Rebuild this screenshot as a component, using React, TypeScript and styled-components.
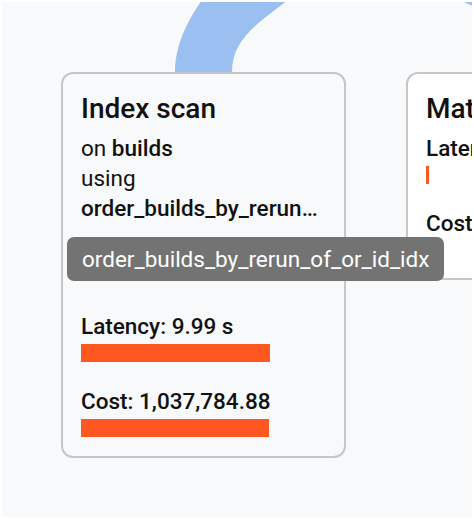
import React from "react";
import styled, { createGlobalStyle } from "styled-components";

const GlobalStyle = createGlobalStyle`
  html, body {
    margin: 0;
    padding: 0;
    background: #ffffff;
  }
  body {
    font-family: Roboto, "Noto Sans", "Liberation Sans", sans-serif;
    color: #111111;
  }
`;

type Metric = { label: string; value: string; ratio: number };

type PlanNode = {
  id: string;
  x: number;
  y: number;
  width: number;
  height: number;
  title: string;
  table?: string;
  index?: string;
  latency: Metric;
  cost: Metric;
  active?: boolean;
};

const BAR_MAX = 189;

const nodes: PlanNode[] = [
  {
    id: "index-scan",
    x: 59,
    y: 70,
    width: 285,
    height: 386,
    title: "Index scan",
    table: "builds",
    index: "order_builds_by_rerun_of_or_id_idx",
    latency: { label: "Latency", value: "9.99 s", ratio: 1 },
    cost: { label: "Cost", value: "1,037,784.88", ratio: 0.995 },
  },
  {
    id: "materialize",
    x: 404,
    y: 70,
    width: 285,
    height: 208,
    title: "Materialize",
    latency: { label: "Latency", value: "0.15 s", ratio: 0.016 },
    cost: { label: "Cost", value: "0.00", ratio: 0 },
    active: true,
  },
];

export default function App() {
  return (
    <>
      <GlobalStyle />
      <Canvas>
        <Edges width="470" height="515" viewBox="2 2 470 515">
          <path
            d="M175 72 C175 45 188 20 202 0 L288 0 C255 25 232 40 232 72 Z"
            fill="#9bbff0"
          />
          <path d="M459 0 L474 0 L474 7 C469 4 464 2 459 0 Z" fill="#9bbff0" />
        </Edges>
        {nodes.map((node) => (
          <Node
            key={node.id}
            $active={node.active}
            style={{
              left: node.x,
              top: node.y,
              width: node.width,
              height: node.height,
            }}
          >
            <Title>{node.title}</Title>
            {node.table && (
              <Line>
                on <strong>{node.table}</strong>
              </Line>
            )}
            {node.index && (
              <>
                <Line>using</Line>
                <Truncated>{node.index}</Truncated>
              </>
            )}
            <Metrics $spaced={!!node.index}>
              <MetricLabel>
                {node.latency.label}: {node.latency.value}
              </MetricLabel>
              <Bar style={{ width: Math.max(3, node.latency.ratio * BAR_MAX) }} />
              <MetricLabel $gap>
                {node.cost.label}: {node.cost.value}
              </MetricLabel>
              {node.cost.ratio > 0 && (
                <Bar style={{ width: node.cost.ratio * BAR_MAX }} />
              )}
            </Metrics>
          </Node>
        ))}
        <Tooltip style={{ left: 65, top: 235 }}>
          order_builds_by_rerun_of_or_id_idx
        </Tooltip>
      </Canvas>
    </>
  );
}

const Canvas = styled.div`
  position: relative;
  margin: 2px;
  width: 470px;
  height: 515px;
  background: #f8f9fa;
  overflow: hidden;
`;

const Edges = styled.svg`
  position: absolute;
  left: 0;
  top: 0;
`;

const Node = styled.div<{ $active?: boolean }>`
  position: absolute;
  box-sizing: border-box;
  display: flex;
  flex-direction: column;
  padding: 19px 18px 18px 18px;
  border: 2px solid #c6c6c6;
  border-radius: 12px;
  background: ${(p) => (p.$active ? "#ffffff" : "#f8f9fa")};
  overflow: hidden;
`;

const Title = styled.div`
  font-size: 28px;
  font-weight: 500;
  line-height: 32px;
  margin-bottom: 8px;
  white-space: nowrap;
`;

const Line = styled.div`
  font-size: 22.5px;
  line-height: 30px;
  white-space: nowrap;

  strong {
    font-weight: 500;
  }
`;

const Truncated = styled(Line)`
  font-weight: 500;
  overflow: hidden;
  text-overflow: ellipsis;
`;

const Metrics = styled.div<{ $spaced: boolean }>`
  display: flex;
  flex-direction: column;
  align-items: flex-start;
  margin-top: ${(p) => (p.$spaced ? "88px" : "0")};
`;

const MetricLabel = styled.div<{ $gap?: boolean }>`
  font-size: 22.5px;
  font-weight: 500;
  line-height: 30px;
  white-space: nowrap;
  margin-top: ${(p) => (p.$gap ? "24px" : "0")};
`;

const Bar = styled.div`
  height: 18px;
  margin-top: 3px;
  background: #ff5722;
`;

const Tooltip = styled.div`
  position: absolute;
  padding: 0 15px;
  height: 44px;
  line-height: 44px;
  font-size: 22.5px;
  color: #ffffff;
  background: #737373;
  border-radius: 7px;
  white-space: nowrap;
`;
